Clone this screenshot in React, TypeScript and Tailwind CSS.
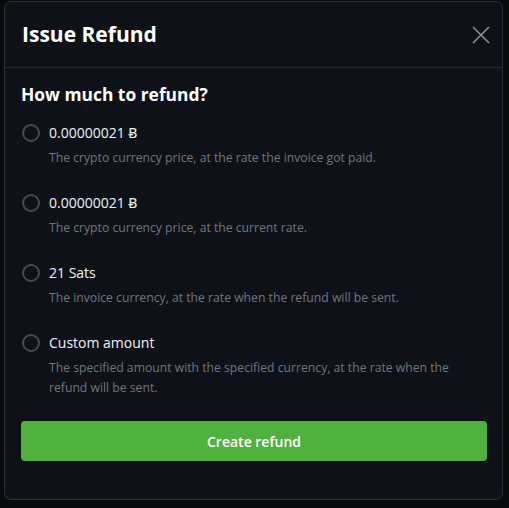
import React from "react";

const options = [
  { label: "0.00000021 Ƀ", desc: ["The crypto currency price, at the rate the invoice got paid."] },
  { label: "0.00000021 Ƀ", desc: ["The crypto currency price, at the current rate."] },
  { label: "21 Sats", desc: ["The invoice currency, at the rate when the refund will be sent."] },
  {
    label: "Custom amount",
    desc: ["The specified amount with the specified currency, at the rate when the", "refund will be sent."],
  },
];

export default function App() {
  return (
    <div
      className="w-[509px] h-[508px] bg-[#08090b] pt-[1px] pl-[4px]"
      style={{ fontFamily: '"Open Sans", "Noto Sans", sans-serif' }}
    >
      <div className="w-[499px] h-[499px] bg-[#0e1117] border border-[#2b2f36] rounded-[7px] flex flex-col">
        <div className="h-[66px] border-b border-[#262a31] flex items-center justify-between pl-[17px] pr-[12px]">
          <h1 className="text-[21px] font-bold text-white leading-none">Issue Refund</h1>
          <svg width="18" height="18" viewBox="0 0 18 18" className="text-[#8b8f96]">
            <path d="M1 1L17 17M17 1L1 17" stroke="currentColor" strokeWidth="1.6" />
          </svg>
        </div>
        <div className="flex flex-col pl-[16px] pr-[15px] pt-[15px]">
          <h2 className="text-[17.4px] font-bold text-white leading-[22px]">How much to refund?</h2>
          <div className="flex flex-col gap-[25px] mt-[18px]">
            {options.map((o, i) => (
              <div key={i} className="flex flex-col">
                <div className="flex items-center gap-[9px] h-[20px]">
                  <span className="w-[18px] h-[18px] rounded-full border-2 border-[#464b53] box-border ml-[1px]" />
                  <span className="text-[14px] text-[#f0f3f6] leading-[20px]">{o.label}</span>
                </div>
                <div className="pl-[28px] mt-[5px] text-[12.2px] leading-[20px] text-[#6f7680]">
                  {o.desc.map((d, j) => (
                    <div key={j}>{d}</div>
                  ))}
                </div>
              </div>
            ))}
          </div>
          <button className="mt-[23px] h-[40px] w-full rounded-[4px] bg-[#51b13e] text-white text-[14px] font-semibold">
            Create refund
          </button>
        </div>
      </div>
    </div>
  );
}
